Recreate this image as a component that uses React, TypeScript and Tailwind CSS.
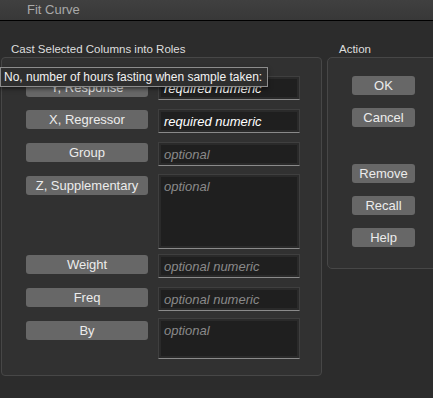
import React from "react";

const font = { fontFamily: '"Liberation Sans", Arial, sans-serif' };

const RoleButton = ({ label, className = "" }: { label: string; className?: string }) => (
  <div
    className={`h-[19px] w-[122px] shrink-0 rounded-[3px] bg-[#676767] text-center text-[13px] leading-[19px] text-[#ececec] ${className}`}
  >
    {label}
  </div>
);

const Field = ({
  text,
  required,
  height,
  multi,
}: {
  text: string;
  required?: boolean;
  height: string;
  multi?: boolean;
}) => (
  <div
    className={`w-[142px] border border-[#3f3f3f] border-b-[#8a8a8a] bg-[#1f1f1f] px-[5px] shadow-[inset_0_0_0_2px_#2a2a2a] ${height} ${
      multi ? "pt-[3px] leading-[16px]" : "leading-[22px]"
    }`}
  >
    <span className={`text-[13px] italic ${required ? "text-white" : "text-[#8a8a8a]"}`}>{text}</span>
  </div>
);

const Row = ({ children, className = "" }: { children: React.ReactNode; className?: string }) => (
  <div className={`flex items-start gap-[10px] ${className}`}>{children}</div>
);

const ActionButton = ({ label, className = "" }: { label: string; className?: string }) => (
  <div
    className={`h-[19px] w-[63px] rounded-[3px] bg-[#676767] text-center text-[13px] leading-[19px] text-[#ececec] ${className}`}
  >
    {label}
  </div>
);

export default function App() {
  return (
    <div className="relative h-[398px] w-[433px] overflow-hidden bg-[#2c2c2c]" style={font}>
      <div className="h-[21px] border-b border-black bg-gradient-to-b from-[#404040] to-[#383838] pl-[27px] text-[13px] leading-[20px] text-[#a9a9a9]">
        Fit Curve
      </div>

      <div className="flex gap-[5px] pl-[1px] pt-[21px]">
        <div className="w-[321px] shrink-0">
          <div className="h-[15px] pl-[10px] text-[11.5px] leading-[15px] text-[#dedede]">
            Cast Selected Columns into Roles
          </div>
          <div className="h-[319px] rounded-[4px] border border-[#474747] bg-[#313131] pl-[24px] pt-[18px]">
            <Row>
              <RoleButton label="Y, Response" className="mt-[2px]" />
              <Field text="required numeric" required height="h-[24px]" />
            </Row>
            <Row className="mt-[9px]">
              <RoleButton label="X, Regressor" className="mt-[1px]" />
              <Field text="required numeric" required height="h-[24px]" />
            </Row>
            <Row className="mt-[9px]">
              <RoleButton label="Group" className="mt-[1px]" />
              <Field text="optional" height="h-[24px]" />
            </Row>
            <Row className="mt-[8px]">
              <RoleButton label="Z, Supplementary" className="mt-[2px]" />
              <Field text="optional" height="h-[75px]" multi />
            </Row>
            <Row className="mt-[5px]">
              <RoleButton label="Weight" className="mt-[1px]" />
              <Field text="optional numeric" height="h-[24px]" />
            </Row>
            <Row className="mt-[9px]">
              <RoleButton label="Freq" className="mt-[1px]" />
              <Field text="optional numeric" height="h-[24px]" />
            </Row>
            <Row className="mt-[7px]">
              <RoleButton label="By" className="mt-[3px]" />
              <Field text="optional" height="h-[41px]" multi />
            </Row>
          </div>
        </div>

        <div className="flex-1">
          <div className="h-[15px] pl-[12px] text-[11.5px] leading-[15px] text-[#dedede]">Action</div>
          <div className="-mr-[8px] h-[212px] rounded-[5px] border border-[#474747] bg-[#313131] pl-[24px] pt-[18px]">
            <ActionButton label="OK" />
            <ActionButton label="Cancel" className="mt-[13px]" />
            <ActionButton label="Remove" className="mt-[37px]" />
            <ActionButton label="Recall" className="mt-[13px]" />
            <ActionButton label="Help" className="mt-[13px]" />
          </div>
        </div>
      </div>

      <div className="absolute left-0 top-[67px] h-[20px] whitespace-nowrap border border-[#8c8c8c] bg-[#2e2e2e] pl-[3px] pr-[5px] text-[12px] leading-[18px] text-[#f2f2f2] shadow-[0_2px_4px_rgba(0,0,0,0.5)]">
        No, number of hours fasting when sample taken:
      </div>
    </div>
  );
}
